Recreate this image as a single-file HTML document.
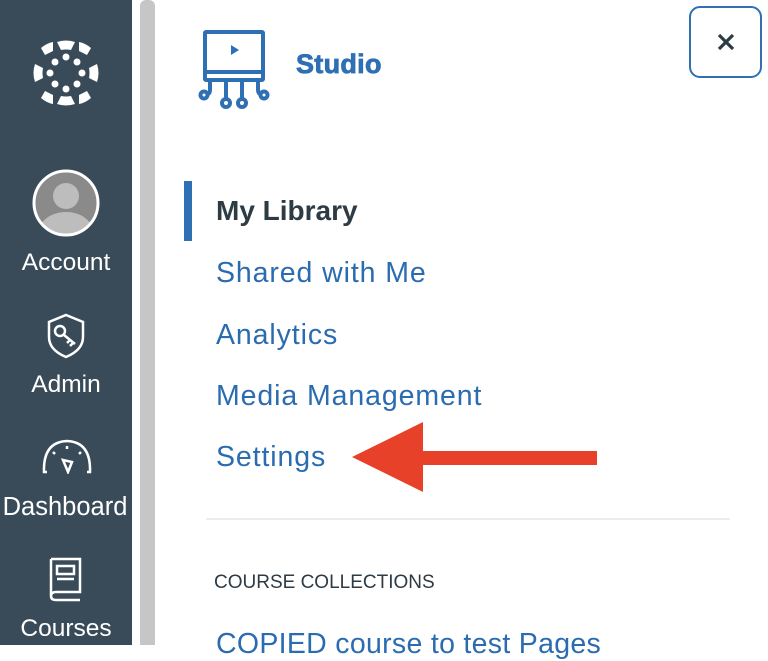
<!DOCTYPE html>
<html><head><meta charset="utf-8"><style>
html,body{margin:0;padding:0;width:768px;height:645px;overflow:hidden;background:#fff;font-family:"Liberation Sans",sans-serif}
.abs{position:absolute}
.side{left:0;top:0;width:132px;height:645px;background:#394b58}
.scroll{left:140px;top:0;width:15px;height:645px;background:#c6c6c6;border-radius:6px 6px 0 0}
.lbl{color:#fff;font-size:24.5px;width:132px;text-align:center;left:0}
.nav{left:216px;font-size:28.5px;color:#2b6cb0;white-space:nowrap;letter-spacing:0.9px}
</style></head><body>
<div class="abs side"></div>
<div class="abs scroll"></div>
<svg class="abs" style="left:31px;top:38px" width="70" height="70" viewBox="0 0 70 70">
<g fill="#fff">
<path d="M26 4 Q35 1 44 4 L40 12 Q35 11 30 12Z"/>
<path d="M26 66 Q35 69 44 66 L40 58 Q35 59 30 58Z"/>
<path d="M4 26 Q1 35 4 44 L12 40 Q11 35 12 30Z"/>
<path d="M66 26 Q69 35 66 44 L58 40 Q59 35 58 30Z"/>
<path d="M10 10 Q16 5 22 4 L22 13 L14 17Z"/>
<path d="M60 10 Q54 5 48 4 L48 13 L56 17Z"/>
<path d="M10 60 Q16 65 22 66 L22 57 L14 53Z"/>
<path d="M60 60 Q54 65 48 66 L48 57 L56 53Z"/>
<circle cx="35" cy="19" r="3.5"/><circle cx="35" cy="51" r="3.5"/><circle cx="19" cy="35" r="3.5"/><circle cx="51" cy="35" r="3.5"/>
<circle cx="24" cy="24" r="3.5"/><circle cx="46" cy="24" r="3.5"/><circle cx="24" cy="46" r="3.5"/><circle cx="46" cy="46" r="3.5"/>
</g></svg>
<svg class="abs" style="left:31px;top:168px" width="70" height="70" viewBox="0 0 70 70">
<defs><clipPath id="c"><circle cx="35" cy="35" r="32"/></clipPath></defs>
<circle cx="35" cy="35" r="32" fill="#8a8a8a"/>
<g clip-path="url(#c)" fill="#bdbdbd"><circle cx="35" cy="28" r="13"/><ellipse cx="35" cy="66" rx="28" ry="22"/></g>
<circle cx="35" cy="35" r="32" fill="none" stroke="#fff" stroke-width="3"/>
</svg>
<div class="abs lbl" style="top:249px">Account</div>
<svg class="abs" style="left:46px;top:313px" width="40" height="46" viewBox="0 0 40 46" fill="none" stroke="#fff" stroke-width="2.5">
<path d="M20 2 L37 9 V24 Q37 37 20 44 Q3 37 3 24 V9Z"/>
<circle cx="14" cy="18" r="5"/><path d="M18 22 L29 31 M24 27 L21 30 M27 30 L24 33"/>
</svg>
<div class="abs lbl" style="top:371px">Admin</div>
<svg class="abs" style="left:41px;top:438px" width="52" height="36" viewBox="0 0 52 36" fill="none" stroke="#fff" stroke-width="2.5">
<path d="M6 34 L3 34 Q2 4 26 3 Q50 4 49 34 L46 34"/><path d="M22 22 L27 34 L31 24Z"/>
<path d="M26 8v3M12 14l2 2M40 14l-2 2"/></svg>
<div class="abs lbl" style="top:493px;font-size:25.5px;left:-1px">Dashboard</div>
<svg class="abs" style="left:48px;top:556px" width="36" height="46" viewBox="0 0 36 46" fill="none" stroke="#fff" stroke-width="2.5">
<path d="M3 3 H32 V36 H8 Q3 36 3 40 Q3 44 8 44 H32 M3 40 V3"/><rect x="9" y="10" width="17" height="8"/><path d="M9 23 H26"/></svg>
<div class="abs lbl" style="top:615px">Courses</div>

<svg class="abs" style="left:198px;top:28px" width="72" height="84" viewBox="0 0 72 84" fill="none" stroke="#2f6fb3" stroke-width="4">
<rect x="7" y="4" width="58" height="48" rx="1"/><path d="M7 44 H65"/>
<path fill="#2f6fb3" stroke="none" d="M33 17 L41 22 L33 27Z"/>
<path d="M12 52 V62 Q12 66 8 67 M60 52 V62 Q60 66 64 67 M28 52 V70 M44 52 V70"/>
<circle cx="6" cy="67" r="3.5"/><circle cx="66" cy="67" r="3.5"/><circle cx="28" cy="75" r="4"/><circle cx="44" cy="75" r="4"/>
</svg>
<div class="abs" style="left:296px;top:49px;font-size:27px;font-weight:900;color:#2f6fb3;-webkit-text-stroke:0.8px #2f6fb3;letter-spacing:0.3px">Studio</div>
<div class="abs" style="left:689px;top:6px;width:73px;height:72px;border:2.5px solid #2f6fb3;border-radius:11px;box-sizing:border-box"></div>
<svg class="abs" style="left:716px;top:32px" width="20" height="20" viewBox="0 0 20 20"><path d="M3 3L17 17M17 3L3 17" stroke="#2d3b45" stroke-width="3.2"/></svg>

<div class="abs" style="left:184px;top:181px;width:8px;height:60px;background:#2f6fb3"></div>
<div class="abs nav" style="top:195px;font-weight:bold;color:#2d3b45;font-size:28px;letter-spacing:0">My Library</div>
<div class="abs nav" style="top:257px">Shared with Me</div>
<div class="abs nav" style="top:319px">Analytics</div>
<div class="abs nav" style="top:380px">Media Management</div>
<div class="abs nav" style="top:441px">Settings</div>
<svg class="abs" style="left:340px;top:415px" width="270" height="85" viewBox="340 415 270 85">
<path fill="#e8412a" d="M352 457 L423 422 L423 451 L597 451 L597 465 L423 465 L423 492Z"/></svg>
<div class="abs" style="left:206px;top:518px;width:524px;height:2px;background:#ececec"></div>
<div class="abs" style="left:214px;top:572px;font-size:19px;color:#2d3b45">COURSE COLLECTIONS</div>
<div class="abs nav" style="top:628px;letter-spacing:0.3px">COPIED course to test Pages</div>
</body></html>
